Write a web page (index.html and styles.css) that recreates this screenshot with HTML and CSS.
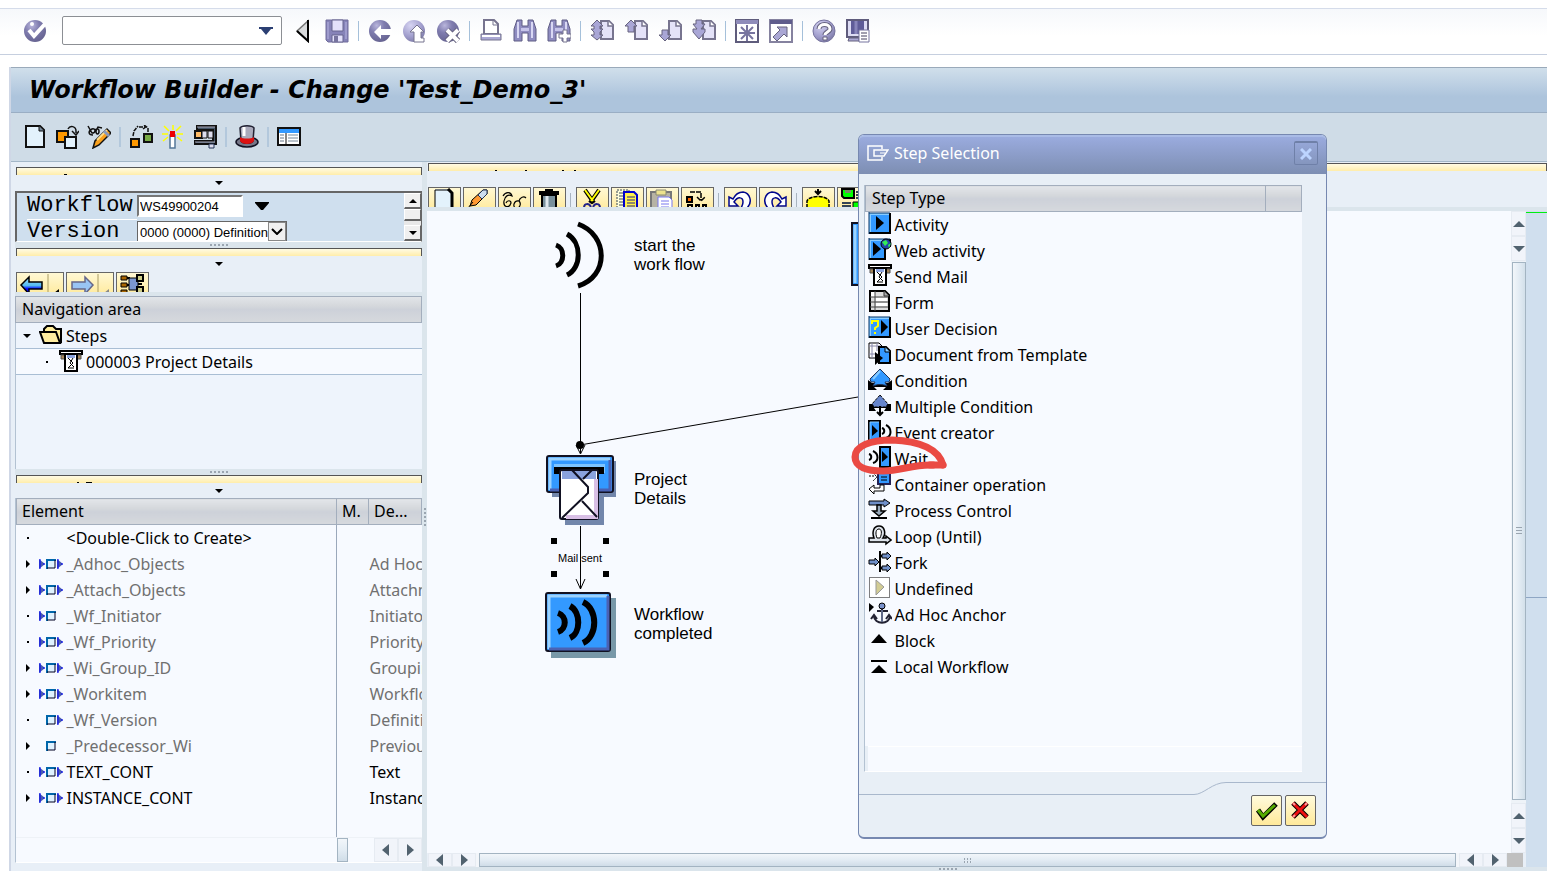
FILE: index.html
```html
<!DOCTYPE html>
<html lang="en">
<head>
    <meta charset="UTF-8">
    <meta name="viewport" content="width=device-width, initial-scale=1.0">
    <title>Workflow Builder - Change 'Test_Demo_3'</title>
    <link rel="stylesheet" href="styles.css">
</head>
<body>
    <!-- Shared icon shapes -->
    <svg class="sprite" aria-hidden="true">
        <defs>
            <radialGradient id="ball" cx="35%" cy="25%" r="85%">
                <stop offset="0" stop-color="#b9b6dc"/><stop offset=".4" stop-color="#807daf"/><stop offset="1" stop-color="#625f8c"/>
            </radialGradient>
            <radialGradient id="ballLight" cx="35%" cy="25%" r="85%">
                <stop offset="0" stop-color="#d6d4f2"/><stop offset=".6" stop-color="#a09dcc"/><stop offset="1" stop-color="#76739f"/>
            </radialGradient>
            <linearGradient id="blueArrow" x1="0" y1="0" x2="0" y2="1">
                <stop offset="0" stop-color="#9df"/><stop offset=".5" stop-color="#5be"/><stop offset=".7" stop-color="#00f"/>
            </linearGradient>
        </defs>
        <symbol id="page-out" viewBox="0 0 24 24"><path d="M11 2h8l4 4v14H11z" fill="#e4e2f8" stroke="#77748f" stroke-width="2"/><path d="M18 2v5h5" fill="#fff" stroke="#77748f" stroke-width="1.5"/></symbol>
        <symbol id="up-arrow" viewBox="0 0 24 24"><path d="M7 1L1 7h3v6h6V7h3z" fill="#a9a6d6" stroke="#66637f"/></symbol>
        <symbol id="down-arrow" viewBox="0 0 24 24"><path d="M7 22l-6-6h3v-5h6v5h3z" fill="#a9a6d6" stroke="#66637f"/></symbol>
        <symbol id="binoculars" viewBox="0 0 24 24"><path d="M4 1h5v6h6V1h5l3 9v12h-8v-8H9v8H1V10z" fill="#8f8cc0" stroke="#5f5c84"/><path d="M5 3v16M19 3v16" stroke="#d9d8f4" stroke-width="2"/><path d="M8 9h8v3H8z" fill="#c6c4ea"/></symbol>
        <symbol id="blue-box" viewBox="0 0 24 24"><path d="M1 1h21v20H1z" fill="#39f"/><path d="M2 21V2h19" fill="none" stroke="#8cf" stroke-width="2"/><path d="M1 21h21V1" fill="none" stroke="#000" stroke-width="2"/><path d="M1 0v22M1 1h21" stroke="#036"/></symbol>
        <symbol id="mail" viewBox="0 0 24 24"><path d="M1 1h22v3H1z" fill="#fff" stroke="#000" stroke-width="2"/><path d="M2 5h20v4H2z" fill="#a68559" stroke="#555"/><path d="M6 4h12v17H6z" fill="#fff" stroke="#000" stroke-width="2"/><path d="M8 5h8v3H8z" fill="#8fa6df"/><path d="M9 8l5 5-5 5h6M14 8l-3 5 4 4" fill="none" stroke="#000"/></symbol>
        <symbol id="in" viewBox="0 0 24 14"><path d="M0 2v10l6-5z" fill="#4a5cae"/><path d="M1 2v10M5 6v2" stroke="#00f"/></symbol>
        <symbol id="var" viewBox="0 0 24 14"><path d="M8 3h8v8H8z" fill="#dff2ff"/><path d="M8 12V3h9" fill="none" stroke="#06a" stroke-width="2"/><path d="M16 3v8H8" fill="none" stroke="#002" stroke-width="1"/></symbol>
        <symbol id="out" viewBox="0 0 24 14"><path d="M18 2v10l6-5z" fill="#4a5cae"/><path d="M19 2v10M23 6v2" stroke="#00f"/></symbol>
    </svg>

    <header class="system-bar">
        <button class="tool" aria-label="Enter"><svg viewBox="0 0 24 24"><circle cx="12" cy="12" r="11" fill="url(#ball)"/><path d="M6 11l5 6L22 5" fill="none" stroke="#fff" stroke-width="4"/><circle cx="9" cy="5" r="2" fill="#fff"/></svg></button>
        <div class="command">
            <input type="text" aria-label="Command">
            <button aria-label="Command history"><svg viewBox="0 0 14 8"><path d="M0 0h14v2H0zM2 2h10L7 8z" fill="#2b3f73"/></svg></button>
        </div>
        <button class="tool" aria-label="Hide command field"><svg viewBox="0 0 24 24"><path d="M17 2v20L6 12z" fill="#d9dbdc" stroke="#777" stroke-width="1.5"/><path d="M6 12l11 10V1" fill="none" stroke="#000" stroke-width="2"/></svg></button>
        <button class="tool" aria-label="Save"><svg viewBox="0 0 24 24"><path d="M1 1h22v22H3l-2-2z" fill="#8683b8" stroke="#706d9c"/><path d="M7 1h11v11H7zM7 16h11v7H7z" fill="#e3e1fb" stroke="#67648f"/><path d="M3 3v17M21 3v17" stroke="#b7b4e2"/><path d="M9 17h4v6H9z" fill="#77749f"/></svg></button>
        <i class="sep"></i>
        <button class="tool" aria-label="Back"><svg viewBox="0 0 24 24"><circle cx="12" cy="12" r="11" fill="url(#ball)"/><path d="M6 13l7-7v4h11v6H13v4z" fill="#fff"/></svg></button>
        <button class="tool" aria-label="Exit"><svg viewBox="0 0 24 24"><circle cx="12" cy="12" r="11" fill="url(#ballLight)"/><path d="M15 6l7 7h-3v6h3v4H12V13H8z" fill="#fff" stroke="#77748f"/></svg></button>
        <button class="tool" aria-label="Cancel"><svg viewBox="0 0 24 24"><circle cx="12" cy="12" r="11" fill="url(#ball)"/><path d="M11 11l11 11M22 11L11 22" stroke="#66637f" stroke-width="6"/><path d="M11 11l11 11M22 11L11 22" stroke="#fff" stroke-width="4"/></svg></button>
        <i class="sep"></i>
        <button class="tool" aria-label="Print"><svg viewBox="0 0 24 24"><path d="M5 15V1h10l4 4v10z" fill="#fff" stroke="#77748f" stroke-width="2"/><path d="M14 1v5h5" fill="none" stroke="#77748f"/><path d="M2 15h20v6H2z" fill="#aaa7d4" stroke="#77748f"/><path d="M3 17h18" stroke="#fff" stroke-width="2"/></svg></button>
        <button class="tool" aria-label="Find"><svg viewBox="0 0 24 24"><use href="#binoculars"/></svg></button>
        <button class="tool" aria-label="Find next"><svg viewBox="0 0 24 24"><use href="#binoculars"/><path d="M16 11h4v4h4v4h-4v4h-4v-4h-4v-4h4z" fill="#fff" stroke="#77748f"/></svg></button>
        <i class="sep"></i>
        <button class="tool" aria-label="First page"><svg viewBox="0 0 24 24"><use href="#page-out"/><path d="M7 1L1 7h3v3H1l3 3v3H1l6 5 6-5h-3v-3l3-3h-3V7h3z" fill="#a9a6d6" stroke="#66637f"/></svg></button>
        <button class="tool" aria-label="Previous page"><svg viewBox="0 0 24 24"><use href="#page-out"/><use href="#up-arrow"/></svg></button>
        <button class="tool" aria-label="Next page"><svg viewBox="0 0 24 24"><use href="#page-out"/><use href="#down-arrow"/></svg></button>
        <button class="tool" aria-label="Last page"><svg viewBox="0 0 24 24"><use href="#page-out"/><path d="M4 1h6v4h3l-4 5h4v3l-6 7-6-7v-3h4L1 5h3z" fill="#a9a6d6" stroke="#66637f"/></svg></button>
        <i class="sep"></i>
        <button class="tool" aria-label="New session"><svg viewBox="0 0 24 24"><path d="M1 1h22v22H1z" fill="#fff" stroke="#5f5c7c" stroke-width="2"/><path d="M1 1h22v4H1z" fill="#8f8cba"/><path d="M12 6v16M4 14h16M6 8l12 12M18 8L6 20" stroke="#77749f" stroke-width="2"/></svg></button>
        <button class="tool" aria-label="Create shortcut"><svg viewBox="0 0 24 24"><path d="M1 1h22v22H1z" fill="#fff" stroke="#85829f" stroke-width="2"/><path d="M1 1h22v4H1z" fill="#5f5c8c"/><path d="M8 8h10v10l-3-3-7 7-4-4 7-7z" fill="#aaa7d4" stroke="#66637f"/></svg></button>
        <i class="sep"></i>
        <button class="tool" aria-label="Help"><svg viewBox="0 0 24 24"><circle cx="12" cy="12" r="11" fill="url(#ballLight)" stroke="#77749f"/><path d="M7 10c0-6 11-6 11 0 0 3-5 3-5 6" fill="none" stroke="#66637f" stroke-width="5"/><path d="M7 10c0-6 11-6 11 0 0 3-5 3-5 6" fill="none" stroke="#fff" stroke-width="3"/><path d="M11 18h4v3h-4z" fill="#fff" stroke="#66637f"/></svg></button>
        <button class="tool" aria-label="Customize layout"><svg viewBox="0 0 24 24"><path d="M1 1h21v17H1z" fill="#dddcf4" stroke="#5f5c7c" stroke-width="2"/><path d="M5 2h13v13H5z" fill="#5f5c98"/><path d="M10 2v13" stroke="#8885ba" stroke-width="3"/><path d="M3 19h10v3H2z" fill="#aaa7d4" stroke="#66637f"/><path d="M13 11h10v12H13z" fill="#fff" stroke="#77749f"/><path d="M15 14h6M15 17h6M15 20h6" stroke="#44415f"/></svg></button>
    </header>

    <div class="window">
        <h1 class="title">Workflow Builder - Change 'Test_Demo_3'</h1>

        <div class="app-bar">
            <button class="tool" aria-label="New"><svg viewBox="0 0 24 24"><path d="M3 1h14l4 4v17H3z" fill="#e3f2fc" stroke="#111" stroke-width="2"/><path d="M16 1v5h5" fill="#789" stroke="#111"/></svg></button>
            <button class="tool" aria-label="Other workflow"><svg viewBox="0 0 24 24"><path d="M2 6h11v11H2z" fill="#f90" stroke="#111" stroke-width="2"/><path d="M10 12h11v11H10z" fill="#e3f2fc" stroke="#111" stroke-width="2"/><path d="M13 4c2-4 8-3 8 2v2M17 6l4 4 3-4" fill="none" stroke="#111" stroke-width="1.5"/></svg></button>
            <button class="tool" aria-label="Display or change"><svg viewBox="0 0 24 24"><path d="M1 1l4 7c4 0 4-5 0-4-4 2-4 6 1 6M8 7c0-4 4-4 4-1 0 4-3 4-3 0l2-4 4 1" fill="none" stroke="#111" stroke-width="1.5"/><path d="M6 23l2-7L20 4l4 4-12 12z" fill="#f9a01b" stroke="#111" stroke-width="1.5"/><path d="M10 15L20 5" stroke="#fd8" stroke-width="2"/><path d="M17 6l5 5" stroke="#89b" stroke-width="3"/></svg></button>
            <i class="sep"></i>
            <button class="tool" aria-label="Test"><svg viewBox="0 0 24 24"><path d="M2 14h8v8H2z" fill="#f90" stroke="#111" stroke-width="2"/><path d="M15 9h8v8h-8z" fill="#7a4" stroke="#111" stroke-width="2"/><path d="M4 11L5 6l4-5M10 2h7M15 0l4 3v4M14 4l4-3" fill="none" stroke="#111" stroke-width="1.5" stroke-dasharray="4 1"/></svg></button>
            <button class="tool" aria-label="Activate"><svg viewBox="0 0 24 24"><path d="M9 10h5v13H9z" fill="#fff" stroke="#579" stroke-width="1.5"/><path d="M9 6h5v6H9z" fill="#e00"/><path d="M12 0v5M3 1l5 5M20 1l-5 5M1 9h6M16 9h6M7 12l-5 4M16 12l5 4" stroke="#ff0" stroke-width="1.5"/></svg></button>
            <button class="tool" aria-label="Where used"><svg viewBox="0 0 24 24"><path d="M4 1h19v18H2v-3h18V5H4z" fill="#456" stroke="#111" stroke-width="2"/><path d="M4 2h18M2 17h20" stroke="#aab"/><path d="M2 6h7v7H2z" fill="#fb6" stroke="#111" stroke-width="2"/><path d="M9 6h5v7H9zM15 6h5v7h-5z" fill="#dde" stroke="#111"/><path d="M16 19h5v4h-5z" fill="#dde" stroke="#235"/></svg></button>
            <i class="sep"></i>
            <button class="tool" aria-label="Services"><svg viewBox="0 0 24 24"><ellipse cx="12" cy="17" rx="11" ry="5" fill="#778" stroke="#112" stroke-width="1.5"/><path d="M5 3c2-3 12-3 14 0l-1 13c-2 3-10 3-12 0z" fill="#aab" stroke="#223" stroke-width="1.5"/><path d="M9 2v9" stroke="#fff" stroke-width="3"/><path d="M5 12c3 2 11 2 14 0v4c-2 4-12 4-14 0z" fill="#d11"/></svg></button>
            <i class="sep"></i>
            <button class="tool" aria-label="Documentation"><svg viewBox="0 0 24 24"><path d="M1 3h22v17H1z" fill="#fff" stroke="#111" stroke-width="2"/><path d="M2 4h20v4H2z" fill="#39f"/><path d="M9 8v11" stroke="#111"/><path d="M3 10h4M3 13h4M3 16h4" stroke="#678"/><path d="M11 10h10M11 13h10M11 16h10" stroke="#789"/></svg></button>
        </div>

        <main class="work">
            <aside class="side">
                <section class="info">
                    <div class="strip"><svg viewBox="0 0 100 1" class="hint"><path d="M47 0h3v1h-3z"/></svg></div>
                    <button class="collapse" aria-label="More functions"><svg viewBox="0 0 8 4"><path d="M0 0h8L4 4z"/></svg></button>
                    <div class="version-box">
                        <div class="fields">
                            <label for="wf">Workflow</label>
                            <div class="wf-field">
                                <input type="text" id="wf" value="WS49900204">
                                <button aria-label="Choose workflow"><svg viewBox="0 0 14 8"><path d="M0 0h14v1L8 8H6L0 1z"/></svg></button>
                            </div>
                            <label for="ver">Version</label>
                            <div class="select">
                                <select id="ver"><option>0000 (0000) Definition</option></select>
                                <span class="select-arrow"><svg viewBox="0 0 12 7"><path d="M1 1l5 5 5-5" fill="none" stroke="#000" stroke-width="2"/></svg></span>
                            </div>
                        </div>
                        <div class="mini-scroll">
                            <button aria-label="Scroll up"><svg viewBox="0 0 8 4"><path d="M4 0l4 4H0z"/></svg></button>
                            <span class="mini-thumb"></span>
                            <button aria-label="Scroll down"><svg viewBox="0 0 8 4"><path d="M0 0h8L4 4z"/></svg></button>
                        </div>
                    </div>
                </section>
                <div class="splitter"><i class="dots"></i></div>

                <section class="navigation">
                    <div class="strip"></div>
                    <button class="collapse" aria-label="More functions"><svg viewBox="0 0 8 4"><path d="M0 0h8L4 4z"/></svg></button>
                    <div class="key-row nav-keys">
                        <button class="key wide" aria-label="Back"><svg viewBox="0 0 46 20"><path d="M4 12l8-8v5h13v7H12v5z" fill="url(#blueArrow)" stroke="#000" stroke-width="1.5"/><path d="M31 1v19" stroke="#a99c66"/><path d="M42 16v4h-5z"/></svg></button>
                        <button class="key wide" aria-label="Forward"><svg viewBox="0 0 46 20"><path d="M26 12l-8-8v5H5v7h13v5z" fill="#99c4f4" stroke="#668" stroke-width="1.5"/><path d="M31 1v19" stroke="#a99c66"/><path d="M42 16v4h-5z" fill="#888"/></svg></button>
                        <button class="key" aria-label="Overview"><svg viewBox="0 0 31 20"><path d="M4 3h6v4H4zM4 10h6v4H4zM4 17h6v3H4z" fill="#a60" stroke="#000"/><path d="M10 5h3M10 12h3M20 11h5M20 17h3" stroke="#000" stroke-width="2"/><path d="M12 5h9v12h-9z" fill="#7b96cf" stroke="#000"/><path d="M20 2h6v6h-6zM20 14h6v6h-6z" fill="#cc8" stroke="#000" stroke-width="2"/></svg></button>
                    </div>
                    <div class="splitter thin"></div>
                    <h2 class="head">Navigation area</h2>
                    <ul class="tree">
                        <li><svg class="twig" viewBox="0 0 8 8"><path d="M0 2h8L4 6z"/></svg><svg class="icon" viewBox="0 0 24 24"><path d="M5 18V5l3-3h6l3 3h5v13z" fill="#ffee9c" stroke="#000" stroke-width="2"/><path d="M1 8h16l4 11H5z" fill="#ffeda0" stroke="#000" stroke-width="2"/></svg>Steps</li>
                        <li class="child"><svg class="twig" viewBox="0 0 8 8"><path d="M3 3h2v2H3z"/></svg><svg class="icon"><use href="#mail"/></svg>000003 Project Details</li>
                    </ul>
                </section>
                <div class="splitter"><i class="dots"></i></div>

                <section class="elements">
                    <div class="strip"><svg viewBox="0 0 100 1" class="hint"><path d="M60 0h2v1h-2zM69 0h6v1h-6z"/></svg></div>
                    <button class="collapse" aria-label="More functions"><svg viewBox="0 0 8 4"><path d="M0 0h8L4 4z"/></svg></button>
                    <div class="grid-box">
                        <table class="element-table">
                            <thead><tr><th class="c-name">Element</th><th class="c-m">M.</th><th class="c-d">De...</th></tr></thead>
                            <tbody>
                                <tr class="own"><td><svg class="twig" viewBox="0 0 8 8"><path d="M3 3h2v2H3z"/></svg><svg class="flow"></svg>&lt;Double-Click to Create&gt;</td><td></td><td></td></tr>
                                <tr><td><svg class="twig" viewBox="0 0 8 8"><path d="M2 0v8l4-4z"/></svg><svg class="flow"><use href="#in"/><use href="#var"/><use href="#out"/></svg>_Adhoc_Objects</td><td></td><td>Ad Hoc</td></tr>
                                <tr><td><svg class="twig" viewBox="0 0 8 8"><path d="M2 0v8l4-4z"/></svg><svg class="flow"><use href="#in"/><use href="#var"/><use href="#out"/></svg>_Attach_Objects</td><td></td><td>Attachm</td></tr>
                                <tr><td><svg class="twig" viewBox="0 0 8 8"><path d="M3 3h2v2H3z"/></svg><svg class="flow"><use href="#in"/><use href="#var"/></svg>_Wf_Initiator</td><td></td><td>Initiator</td></tr>
                                <tr><td><svg class="twig" viewBox="0 0 8 8"><path d="M3 3h2v2H3z"/></svg><svg class="flow"><use href="#in"/><use href="#var"/><use href="#out"/></svg>_Wf_Priority</td><td></td><td>Priority</td></tr>
                                <tr><td><svg class="twig" viewBox="0 0 8 8"><path d="M2 0v8l4-4z"/></svg><svg class="flow"><use href="#in"/><use href="#var"/><use href="#out"/></svg>_Wi_Group_ID</td><td></td><td>Grouping</td></tr>
                                <tr><td><svg class="twig" viewBox="0 0 8 8"><path d="M2 0v8l4-4z"/></svg><svg class="flow"><use href="#in"/><use href="#var"/><use href="#out"/></svg>_Workitem</td><td></td><td>Workflow</td></tr>
                                <tr><td><svg class="twig" viewBox="0 0 8 8"><path d="M3 3h2v2H3z"/></svg><svg class="flow"><use href="#var"/><use href="#out"/></svg>_Wf_Version</td><td></td><td>Definiti</td></tr>
                                <tr><td><svg class="twig" viewBox="0 0 8 8"><path d="M2 0v8l4-4z"/></svg><svg class="flow"><use href="#var"/></svg>_Predecessor_Wi</td><td></td><td>Previou</td></tr>
                                <tr class="own"><td><svg class="twig" viewBox="0 0 8 8"><path d="M3 3h2v2H3z"/></svg><svg class="flow"><use href="#in"/><use href="#var"/><use href="#out"/></svg>TEXT_CONT</td><td></td><td>Text</td></tr>
                                <tr class="own"><td><svg class="twig" viewBox="0 0 8 8"><path d="M2 0v8l4-4z"/></svg><svg class="flow"><use href="#in"/><use href="#var"/><use href="#out"/></svg>INSTANCE_CONT</td><td></td><td>Instanc</td></tr>
                            </tbody>
                        </table>
                        <div class="grid-rest"></div>
                        <div class="grid-foot">
                            <span class="thumb-h small"></span>
                            <button class="arrow" aria-label="Scroll left"><svg viewBox="0 0 12 12"><path d="M9 0v12L2 6z"/></svg></button>
                            <button class="arrow" aria-label="Scroll right"><svg viewBox="0 0 12 12"><path d="M3 0v12l7-6z"/></svg></button>
                        </div>
                    </div>
                </section>
            </aside>

            <div class="v-splitter"><i class="v-dots"></i></div>

            <section class="editor">
                <div class="strip"><svg viewBox="0 0 200 1" class="hint wide-hint"><path d="M66 0h2v1h-2zM96 0h2v1h-2zM133 0h2v1h-2zM145 0h2v1h-2z"/></svg></div>
                <div class="key-row editor-keys">
                    <button class="key" aria-label="Create"><svg viewBox="0 0 31 20"><path d="M6 1h14l3 4v16H6z" fill="#e3f2fc"/><path d="M6 20V2h13" fill="none" stroke="#000"/><path d="M19 1l4 4v15" fill="none" stroke="#000" stroke-width="3"/></svg></button>
                    <button class="key" aria-label="Change"><svg viewBox="0 0 31 20"><path d="M6 18l2-6L19 2h4v4L12 17z" fill="#f93" stroke="#000"/><path d="M14 7l5-5h4v4l-5 5z" fill="#cde" stroke="#235"/><path d="M4 20l5-6" stroke="#000"/></svg></button>
                    <button class="key" aria-label="Display"><svg viewBox="0 0 31 20"><path d="M4 8c3-5 8-4 9 0-4-2-7 0-8 5-1 6 5 8 7 2 0-3-4-3-5 0M20 13c-5-1-7 6-3 7 3 1 6-4 3-7zm0 0c1-4 5-5 7-3" fill="none" stroke="#000" stroke-width="1.2"/></svg></button>
                    <button class="key" aria-label="Delete"><svg viewBox="0 0 31 20"><path d="M6 4h18v2H6zM12 4V2h6v2" fill="#dde" stroke="#000" stroke-width="2"/><path d="M8 7h14v14H8z" fill="#78909c" stroke="#000" stroke-width="2"/><path d="M13 8v12" stroke="#dfe8ee" stroke-width="3"/></svg></button>
                    <i class="key-sep"></i>
                    <button class="key" aria-label="Cut"><svg viewBox="0 0 31 20"><path d="M8 2l9 13M22 2l-9 13" stroke="#000" stroke-width="4"/><path d="M8 2l8 11M22 2l-8 11" stroke="#ff0" stroke-width="2"/><path d="M7 20c0-5 5-5 7-1M23 20c0-5-5-5-7-1" fill="none" stroke="#228" stroke-width="2"/></svg></button>
                    <button class="key" aria-label="Copy"><svg viewBox="0 0 31 20"><path d="M5 2h12v18H5z" fill="#ffd" stroke="#345" stroke-dasharray="2 1"/><path d="M7 5h5M7 8h5M7 11h5M7 14h5M7 17h5" stroke="#345"/><path d="M12 4h10l3 3v14H12z" fill="#fff04d" stroke="#00c" stroke-width="2"/><path d="M15 9h8M15 12h8M15 15h8M15 18h8" stroke="#228"/></svg></button>
                    <button class="key" aria-label="Paste"><svg viewBox="0 0 31 20"><path d="M4 4h20v17H4z" fill="#b7b3a4" stroke="#777" stroke-width="2"/><path d="M9 2h10v5H9z" fill="#ece28e" stroke="#887"/><path d="M11 9h11l3 3v9H11z" fill="#fff" stroke="#77e"/><path d="M14 13h8M14 16h8M14 19h8" stroke="#77e"/></svg></button>
                    <button class="key" aria-label="Move"><svg viewBox="0 0 31 20"><path d="M5 9h5v5H5z" fill="#f60" stroke="#000" stroke-width="2"/><path d="M8 4h11v8M15 9l4 4 4-4" fill="none" stroke="#000" stroke-width="1.5" stroke-dasharray="5 1"/><path d="M6 20v-3h4v3M14 20v-3h3v3M21 20v-3h3v3" fill="none" stroke="#000" stroke-width="2"/></svg></button>
                    <i class="key-sep"></i>
                    <button class="key" aria-label="Undo"><svg viewBox="0 0 31 20"><path d="M4 9v9h9l-4-4c4-6 9-5 9 0 0 3-1 4-2 6h6c6-6 3-15-4-16-5 0-8 3-10 7z" fill="#fff" stroke="#00068c" stroke-width="1.5"/></svg></button>
                    <button class="key" aria-label="Redo"><svg viewBox="0 0 31 20"><path d="M26 9v9h-9l4-4c-4-6-9-5-9 0 0 3 1 4 2 6H8C2 14 5 5 12 4c5 0 8 3 10 7z" fill="#fff" stroke="#00068c" stroke-width="1.5"/></svg></button>
                    <i class="key-sep"></i>
                    <button class="key" aria-label="Generate"><svg viewBox="0 0 31 20"><path d="M4 20v-7c2-6 20-6 22 0v7" fill="#ff0" stroke="#000" stroke-width="1.5" stroke-dasharray="4 1"/><path d="M15 1v5M12 3l3 3 3-3" fill="none" stroke="#000" stroke-width="2"/></svg></button>
                    <button class="key" aria-label="Save as"><svg viewBox="0 0 31 20"><path d="M4 1h12v9H6l-2-2z" fill="#0f0" stroke="#000" stroke-width="2"/><path d="M7 2h6v3H7z" fill="#786"/><path d="M18 4h5M18 7h5M18 10h5M4 15h9M4 18h9" stroke="#345" stroke-width="2"/><path d="M15 14h8v7h-8z" fill="#0f0" stroke="#000"/></svg></button>
                </div>
                <div class="splitter thin"></div>

                <div class="canvas-area">
                    <div class="canvas">
                        <svg class="edges" viewBox="0 0 480 420">
                            <path d="M153.500 82v160M149 234l4.500 9 4.500-9M153 234l278-48M153.500 315v63M149 368l4.500 10 4.500-10" fill="none" stroke="#000"/>
                            <circle cx="153" cy="234" r="4"/>
                            <path d="M124 327h6v6h-6zM176 327h6v6h-6zM124 360h6v6h-6zM176 360h6v6h-6z"/>
                        </svg>
                        <svg class="node start" viewBox="0 0 54 68"><path d="M3 24c9 3 9 18 0 21M14 13c15 8 15 34 0 41M25 3c31 11 31 53 0 62" fill="none" stroke="#000" stroke-width="5"/></svg>
                        <svg class="node mail-node" viewBox="0 0 72 72">
                            <path d="M6 6h64v36H58v28H19V42H6z" fill="#7286ab"/>
                            <rect x="1" y="1" width="66" height="36" rx="2" fill="#39f" stroke="#112" stroke-width="2"/>
                            <path d="M4 35V4h60" fill="none" stroke="#9cd3ff" stroke-width="3"/><path d="M4 35h60V5" fill="none" stroke="#4a62b4" stroke-width="3"/>
                            <path d="M8 9h51v9H8z" fill="#7dc4ff"/><path d="M8 12h50v7H8z"/>
                            <rect x="14" y="15" width="38" height="49" rx="2" fill="#fff" stroke="#112" stroke-width="2"/><path d="M16 16h34v8H16z" fill="#8aa2dd"/><path d="M50 24v38H20" fill="none" stroke="#d8bfe5" stroke-width="4"/>
                            <path d="M26 15l16 17v6L16 63M46 15l-9 9M36 46l15 16" fill="none" stroke="#112" stroke-width="2"/>
                        </svg>
                        <svg class="node done" viewBox="0 0 72 66">
                            <path d="M6 6h65v60H6z" fill="#7898a8"/>
                            <rect x="1" y="1" width="64" height="58" rx="2" fill="#39f" stroke="#112" stroke-width="2"/>
                            <path d="M4 57V4h58" fill="none" stroke="#9cd3ff" stroke-width="3"/><path d="M4 57h59V4" fill="none" stroke="#4a62b4" stroke-width="3"/>
                            <path d="M13 21c9 3 9 16 0 19M25 14c11 6 11 27 0 32M38 10c15 7 15 34 0 41" fill="none" stroke="#000" stroke-width="6"/>
                        </svg>
                        <svg class="node hidden-node" viewBox="0 0 20 66"><path d="M1 1h30v62H1z" fill="#39f" stroke="#112" stroke-width="2"/><path d="M4 3v58" stroke="#9cd3ff" stroke-width="3"/></svg>
                        <p class="label l-start">start the<br>work flow</p>
                        <p class="label l-mail">Project<br>Details</p>
                        <p class="label l-sent">Mail sent</p>
                        <p class="label l-done">Workflow<br>completed</p>
                    </div>
                    <div class="scroll-v">
                        <button class="arrow" aria-label="Page up"><svg viewBox="0 0 12 12"><path d="M0 9h12L6 3z"/></svg></button>
                        <button class="arrow" aria-label="Scroll down"><svg viewBox="0 0 12 12"><path d="M0 3h12L6 9z"/></svg></button>
                        <span class="thumb-v"><i class="v-dots"></i></span>
                        <button class="arrow" aria-label="Scroll up"><svg viewBox="0 0 12 12"><path d="M0 9h12L6 3z"/></svg></button>
                        <button class="arrow" aria-label="Page down"><svg viewBox="0 0 12 12"><path d="M0 3h12L6 9z"/></svg></button>
                    </div>
                    <div class="overview"><div class="overview-top"></div></div>
                </div>
                <div class="scroll-h">
                    <button class="arrow" aria-label="Page left"><svg viewBox="0 0 12 12"><path d="M9 0v12L2 6z"/></svg></button>
                    <button class="arrow" aria-label="Scroll right"><svg viewBox="0 0 12 12"><path d="M3 0v12l7-6z"/></svg></button>
                    <span class="thumb-h"><i class="grip"></i></span>
                    <button class="arrow" aria-label="Scroll left"><svg viewBox="0 0 12 12"><path d="M9 0v12L2 6z"/></svg></button>
                    <button class="arrow" aria-label="Page right"><svg viewBox="0 0 12 12"><path d="M3 0v12l7-6z"/></svg></button>
                    <span class="corner"></span>
                </div>
                <div class="splitter thin last"><i class="dots"></i></div>
            </section>
        </main>
    </div>

    <!-- Step Selection window -->
    <div class="dialog" role="dialog" aria-labelledby="dialogTitle">
        <div class="dialog-head">
            <svg class="dialog-icon" viewBox="0 0 22 16"><path d="M15 4V1H1v14h14v-3M7 5h14l-4 6H7z" fill="none" stroke="#fff" stroke-width="1.5"/><path d="M13 8h5" stroke="#fff"/></svg>
            <h2 id="dialogTitle">Step Selection</h2>
            <button class="close" aria-label="Close"><svg viewBox="0 0 12 12"><path d="M1 1l10 10M11 1L1 11" stroke="#bcd4ff" stroke-width="3"/></svg></button>
        </div>
        <div class="dialog-body">
            <div class="step-box">
                <table class="step-table">
                    <thead><tr><th>Step Type</th><th class="c-end"></th></tr></thead>
                    <tbody>
                        <tr><td colspan="2"><svg class="icon" viewBox="0 0 24 24"><use href="#blue-box"/><path d="M8 4v14l8-7z"/></svg>Activity</td></tr>
                        <tr><td colspan="2"><svg class="icon" viewBox="0 0 24 24"><use href="#blue-box"/><path d="M18 9h6v15h-6z" fill="#f7faff"/><path d="M17 8v13H1" fill="none" stroke="#000" stroke-width="2"/><path d="M5 4v14l8-7z"/><circle cx="18" cy="6" r="5" fill="#24a" stroke="#000"/><path d="M14 4l4-2 2 3-3 3zM20 7l3-2-2 5z" fill="#3e5"/></svg>Web activity</td></tr>
                        <tr><td colspan="2"><svg class="icon"><use href="#mail"/></svg>Send Mail</td></tr>
                        <tr><td colspan="2"><svg class="icon" viewBox="0 0 24 24"><path d="M2 1h15l4 4v16H2z" fill="#ddd" stroke="#000" stroke-width="2"/><path d="M3 2h4v5H3zM8 8h11v3H8zM8 13h11v3H8z" fill="#fff"/><path d="M7 1v20M2 7h18M2 12h18M2 17h18" stroke="#444"/><path d="M16 1v5h5" fill="#aaa" stroke="#333"/></svg>Form</td></tr>
                        <tr><td colspan="2"><svg class="icon" viewBox="0 0 24 24"><use href="#blue-box"/><path d="M4 8V5h6v5l-3 2v2M7 16v2" fill="none" stroke="#ff0" stroke-width="2"/><path d="M13 4v14l7-7z"/></svg>User Decision</td></tr>
                        <tr><td colspan="2"><svg class="icon" viewBox="0 0 24 24"><path d="M1 1h10l3 3v12H1z" fill="#fff" stroke="#000"/><path d="M4 1v15M9 1v8M1 4h12M1 12h6" stroke="#88a"/><path d="M11 5h7l4 4v12H11z" fill="#39f" stroke="#000" stroke-width="2"/><path d="M17 5v5h5" fill="#8cf" stroke="#000"/><path d="M7 10v13l8-7z"/></svg>Document from Template</td></tr>
                        <tr><td colspan="2"><svg class="icon" viewBox="0 0 24 24"><path d="M0 12v10h9l-3-3h12l-3 3h9V12l-4 3H4z"/><path d="M12 1l10 10-1 3h-4l2 4c-4-2-10-2-14 0l2-4H3l-1-3z" fill="#39f" stroke="#235"/><path d="M12 3l-7 8" stroke="#8cf" stroke-width="2"/></svg>Condition</td></tr>
                        <tr><td colspan="2"><svg class="icon" viewBox="0 0 24 24"><path d="M1 10v7h7l-2-3h12l-2 3h7v-7z"/><path d="M12 1l8 9-2 3H6l-2-3z" fill="#6685cc" stroke="#000" stroke-dasharray="3 1"/><path d="M12 12v9M9 18l3 3 3-3" fill="none" stroke="#000" stroke-width="2"/></svg>Multiple Condition</td></tr>
                        <tr><td colspan="2"><svg class="icon" viewBox="0 0 24 24"><path d="M1 1h11v20H1z" fill="#39f" stroke="#000" stroke-width="2"/><path d="M2 20V2h9" fill="none" stroke="#8cf"/><path d="M4 5v11l6-5z"/><path d="M14 8c3 1 3 5 0 6M18 5c6 3 6 11 0 13" fill="none" stroke="#000" stroke-width="2"/></svg>Event creator</td></tr>
                        <tr><td colspan="2"><svg class="icon" viewBox="0 0 24 24"><path d="M12 1h10v20H12z" fill="#39f" stroke="#000" stroke-width="2"/><path d="M14 5v11l6-5z"/><path d="M1 8c3 1 3 5 0 6M5 5c6 3 6 10 0 12" fill="none" stroke="#000" stroke-width="2"/></svg>Wait</td></tr>
                        <tr><td colspan="2"><svg class="icon" viewBox="0 0 24 24"><path d="M10 1h12v11H10z" fill="#39f" stroke="#225" stroke-width="2"/><path d="M13 5h6M13 8h6" stroke="#000"/><path d="M1 4h6M5 1l4 4-4 4" fill="none" stroke="#000" stroke-dasharray="2 1"/><path d="M12 13v3H6v-3l-5 4 5 5v-3h10v-6z" fill="#fff" stroke="#000"/></svg>Container operation</td></tr>
                        <tr><td colspan="2"><svg class="icon" viewBox="0 0 24 24"><path d="M1 3h15V1l6 4-6 4V7H1z" fill="#6f8fc8" stroke="#000"/><path d="M9 7h4v6h4l-6 5-6-5h4z" fill="#9ab"  stroke="#000" stroke-width="1.5"/><path d="M3 20h16" stroke="#000" stroke-width="2"/></svg>Process Control</td></tr>
                        <tr><td colspan="2"><svg class="icon" viewBox="0 0 24 24"><path d="M1 14h5c-2-5-1-12 5-12s7 8 4 12h3v-2l5 4-5 4v-2H1z" fill="#dde3ea" stroke="#000" stroke-width="1.5"/><path d="M9 14c-2-5-1-9 2-9s3 5 1 9z" fill="#fff" stroke="#000"/></svg>Loop (Until)</td></tr>
                        <tr><td colspan="2"><svg class="icon" viewBox="0 0 24 24"><path d="M12 1v21M12 6h5M12 18h5" stroke="#000" stroke-width="2"/><path d="M1 10h6V8l4 4-4 4v-2H1zM14 4h5V2l4 4-4 4V8h-5zM14 16h5v-2l4 4-4 4v-2h-5z" fill="#6f8fc8" stroke="#000"/></svg>Fork</td></tr>
                        <tr><td colspan="2"><svg class="icon" viewBox="0 0 24 24"><path d="M1.500 1.500h20v20h-20z" fill="#fff" stroke="#000" stroke-dasharray="1 1"/><path d="M8 4v15l8-8z" fill="#d2cc94" stroke="#999"/></svg>Undefined</td></tr>
                        <tr><td colspan="2"><svg class="icon" viewBox="0 0 24 24"><path d="M1 1v9l5-5z"/><circle cx="14" cy="4" r="3" fill="#7b93cc" stroke="#000"/><path d="M14 6v14M9 9h11M6 14c0 9 16 9 16 0M3 17l3-4 3 4M18 17l3-4 3 4" fill="none" stroke="#223" stroke-width="2"/><path d="M14 8v12" stroke="#9db1df"/></svg>Ad Hoc Anchor</td></tr>
                        <tr><td colspan="2"><svg class="icon" viewBox="0 0 24 24"><path d="M3 15h16l-8-9z"/></svg>Block</td></tr>
                        <tr><td colspan="2"><svg class="icon" viewBox="0 0 24 24"><path d="M3 6h16v2H3zM3 19h16l-8-8z"/></svg>Local Workflow</td></tr>
                    </tbody>
                </table>
            </div>
            <div class="step-foot"></div>
        </div>
        <div class="dialog-foot">
            <span class="foot-line"></span>
            <svg class="foot-curve" viewBox="0 0 32 14"><path d="M0 12.500c10 0 18-12 32-12" fill="none" stroke="#a9b8cc"/></svg>
            <div class="foot-keys">
                <button class="ok-key" aria-label="Continue"><svg viewBox="0 0 24 24"><path d="M3 11l5 7L21 5" fill="none" stroke="#000" stroke-width="5"/><path d="M3 11l5 6L20 6" fill="none" stroke="#5a0" stroke-width="3"/></svg></button>
                <button class="ok-key" aria-label="Cancel"><svg viewBox="0 0 24 24"><path d="M4 4l14 14M18 4L4 18" stroke="#000" stroke-width="5"/><path d="M4 4l14 14M18 4L4 18" stroke="#e11" stroke-width="3"/><path d="M4 4l2 2M18 4l-2 2M4 18l2-2" stroke="#f99" stroke-width="2"/></svg></button>
            </div>
        </div>
        <svg class="marker" viewBox="0 0 98 42"><path d="M93 30C88 12 66 6 42 5 20 5 5 11 5 22c0 10 12 14 28 14 18 0 30-7 50-6" fill="none" stroke="#ea4a43" stroke-width="7" stroke-linecap="round" stroke-linejoin="round"/><path d="M80 30h13" stroke="#ea4a43" stroke-width="7" stroke-linecap="round"/></svg>
    </div>
</body>
</html>
```

FILE: styles.css
```css
* {
    box-sizing: border-box;
}
body {
    margin: 0;
    min-height: 100vh;
    display: flex;
    flex-direction: column;
    position: relative;
    background-color: #fff;
    font-family: "Noto Sans", Tahoma, sans-serif;
    font-size: 16px;
    line-height: 26px;
    color: #000;
}
button {
    padding: 0;
    border: none;
    background: none;
    display: flex;
    align-items: center;
    justify-content: center;
    flex: none;
    cursor: pointer;
}
h1, h2, p, ul {
    margin: 0;
    padding: 0;
}
svg {
    display: block;
    flex: none;
}
.sprite {
    position: absolute;
    width: 0;
    height: 0;
}

/* System toolbar */
.system-bar {
    display: flex;
    align-items: center;
    gap: 8px;
    margin-top: 8px;
    height: 47px;
    padding: 0 22px 2px;
    border-top: 1px solid #d5dcea;
    border-bottom: 1px solid #c6cfdf;
    background: linear-gradient(#f6f8fb, #fff 60%);
}
.tool {
    width: 26px;
    height: 26px;
}
.tool svg {
    width: 24px;
    height: 24px;
}
.sep {
    width: 1px;
    height: 20px;
    background-color: #a5c0da;
    flex: none;
}
.command {
    display: flex;
    width: 220px;
    height: 29px;
    margin: 0 0 0 6px;
    border: 1px solid #8c8f94;
    border-radius: 2px;
    background-color: #fff;
}
.command input {
    flex: 1;
    min-width: 0;
    border: none;
    background: none;
    font-size: 16px;
}
.command button {
    width: 30px;
}
.command svg {
    width: 14px;
    height: 8px;
}

/* Main window */
.window {
    flex: 1;
    display: flex;
    flex-direction: column;
    margin: 12px 0 0 9px;
    border-left: 2px solid #cfd7e6;
    min-height: 0;
}
.title {
    height: 46px;
    padding-left: 18px;
    border-top: 1px solid #9aaaba;
    border-bottom: 1px solid #9aaec4;
    background: linear-gradient(#d0dfeb, #adc4dc 65%, #adc4dc);
    font-family: "DejaVu Sans", Verdana, sans-serif;
    font-size: 24px;
    font-style: italic;
    font-weight: bold;
    line-height: 44px;
}
.app-bar {
    display: flex;
    align-items: center;
    gap: 8px;
    height: 49px;
    padding-left: 12px;
    border-bottom: 1px solid #a3b7c8;
    background-color: #cfdce7;
}
.app-bar .tool {
    width: 24px;
}
.app-bar .sep {
    width: 2px;
    background-color: #b3c8dc;
}
.work {
    flex: 1;
    display: flex;
    background-color: #e8eff7;
}
.side {
    width: 411px;
    flex: none;
    display: flex;
    flex-direction: column;
    padding: 0 0 8px 4px;
}
.strip {
    height: 8px;
    margin-left: 1px;
    border: 1px solid #555;
    border-bottom: none;
    background: linear-gradient(#fffbe4, #ffedaa);
    display: flex;
    align-items: flex-end;
}
.hint {
    width: 100px;
    height: 1px;
}
.wide-hint {
    width: 200px;
}
.collapse {
    width: 100%;
    height: 16px;
}
.collapse svg {
    width: 8px;
    height: 4px;
}
.splitter {
    height: 6px;
    background-color: #dbe5ec;
    display: flex;
    align-items: center;
    justify-content: center;
    flex: none;
}
.splitter.thin {
    height: 4px;
}
.splitter.last {
    padding-right: 78px;
}
.dots {
    width: 18px;
    height: 2px;
    background: repeating-linear-gradient(90deg, #9aa5b0 0 2px, transparent 2px 4px);
}
.v-splitter {
    width: 5px;
    background-color: #dbe5ec;
    display: flex;
    flex-direction: column;
    flex: none;
    align-items: center;
    justify-content: center;
}
.v-dots {
    width: 2px;
    height: 18px;
    background: repeating-linear-gradient(#9aa5b0 0 2px, transparent 2px 4px);
}

/* Workflow and version */
.info {
    padding-top: 5px;
}
.version-box {
    display: flex;
    justify-content: space-between;
    height: 51px;
    overflow: hidden;
    border: 1px solid #666;
    border-width: 2px 1px 0 2px;
    border-bottom: 1px solid #fff;
    background-color: #cfdfee;
}
.fields {
    display: grid;
    grid-template-columns: 110px auto;
    grid-auto-rows: 26px;
    align-items: center;
    padding-left: 10px;
    font-family: "Liberation Mono", monospace;
    font-size: 22px;
}
.fields label {
    border-bottom: 1px solid #fff;
}
.wf-field {
    display: flex;
    align-items: center;
    gap: 12px;
}
.wf-field input {
    width: 106px;
    height: 22px;
    padding: 0 1px;
    border: 2px solid #fff;
    border-top-color: #777;
    border-left-color: #777;
    font-family: "Liberation Sans", Arial, sans-serif;
    font-size: 13px;
}
.wf-field svg {
    width: 14px;
    height: 8px;
}
.select {
    position: relative;
    width: 150px;
    height: 22px;
}
.select select {
    display: block;
    appearance: none;
    width: 150px;
    height: 22px;
    padding: 0 2px;
    border: 1px solid #666;
    border-radius: 0;
    background-color: #fff;
    color: #000;
    font-family: "Liberation Sans", Arial, sans-serif;
    font-size: 13px;
}
.select-arrow {
    position: absolute;
    top: 1px;
    right: 1px;
    width: 18px;
    height: 19px;
    display: flex;
    align-items: center;
    justify-content: center;
    border: 1px solid #888;
    background-color: #f0f0f0;
    pointer-events: none;
}
.select-arrow svg {
    width: 12px;
    height: 7px;
}
.mini-scroll {
    width: 17px;
    display: flex;
    flex-direction: column;
    background-color: #e8e8e8;
}
.mini-scroll button,
.mini-thumb {
    height: 16px;
    border: 1px solid #fff;
    border-right-color: #666;
    border-bottom: 2px solid #666;
    background-color: #f0f0f0;
}
.mini-thumb {
    height: 12px;
    margin-bottom: auto;
}
.mini-scroll svg {
    width: 8px;
    height: 4px;
}

/* Yellow keys */
.key-row {
    display: flex;
    gap: 2px;
    height: 20px;
    margin-left: 1px;
}
.key {
    width: 33px;
    height: 20px;
    border: 1px solid #666;
    border-bottom: none;
    background: linear-gradient(#fff8d4, #ffeca4);
    overflow: hidden;
}
.key svg {
    width: 31px;
    height: 20px;
}
.key.wide {
    width: 48px;
}
.key.wide svg {
    width: 46px;
}
.key-sep {
    width: 6px;
    height: 14px;
    align-self: flex-end;
    background: linear-gradient(90deg, transparent 2px, #a8b4c0 2px 3px, transparent 3px);
}

/* Navigation tree */
.head, .element-table th, .step-table th {
    height: 27px;
    padding: 0 6px;
    border: 1px solid #a3aebd;
    background: linear-gradient(#e2e5e9, #d5d8dc 35%, #cdd1d9 50%, #d6d9dd);
    font-size: 16px;
    font-weight: normal;
    line-height: 25px;
    text-align: left;
}
.element-table th, .step-table th {
    height: 26px;
}
.tree {
    list-style: none;
    height: 146px;
    border: 1px solid #b3c2d2;
    border-width: 0 0 0 1px;
    background-color: #eef4fc;
}
.tree li {
    display: flex;
    align-items: center;
    height: 26px;
    padding-left: 7px;
    border-bottom: 1px solid #a9bed4;
    background-color: #eef4fc;
}
.tree .child {
    padding-left: 27px;
    background-color: #f7faff;
}
.twig {
    width: 8px;
    height: 8px;
    margin-right: 8px;
}
.icon {
    width: 24px;
    height: 24px;
    margin-right: 3px;
}

/* Element table */
.elements {
    flex: 1;
    display: flex;
    flex-direction: column;
}
.elements .collapse {
    height: 15px;
}
.grid-box {
    flex: 1;
    display: flex;
    flex-direction: column;
    border: 1px solid #b3c2d2;
    border-width: 0 0 1px 1px;
    border-bottom-color: #fff;
    background-color: #f7faff;
}
.element-table {
    width: 100%;
    table-layout: fixed;
    border-collapse: collapse;
}
.element-table th {
    padding: 0 5px;
}
.c-name {
    width: 320px;
}
.c-m {
    width: 32px;
}
.element-table td {
    height: 26px;
    padding: 0;
    overflow: hidden;
    white-space: nowrap;
    color: #707070;
}
.element-table .own td {
    color: #000;
}
.element-table td:first-child {
    display: flex;
    align-items: center;
    padding-left: 7px;
    border-right: 1px solid #9aa8bb;
}
.element-table td:last-child {
    padding-left: 1px;
}
.element-table .twig {
    margin-right: 7px;
}
.flow {
    width: 24px;
    height: 14px;
    margin-right: 4px;
}
.grid-rest {
    flex: 1;
    width: 321px;
    border-right: 1px solid #9aa8bb;
}
.grid-foot {
    display: flex;
    height: 25px;
    padding-left: 321px;
    border-top: 1px solid #eef2f7;
}
.arrow {
    width: 24px;
    background-color: #f1f4fa;
    border: 1px solid #e6ebf2;
}
.arrow svg {
    width: 12px;
    height: 12px;
    fill: #51626f;
}
.thumb-h {
    border: 1px solid #a3b4c2;
    background: linear-gradient(#f2f6fa, #e3ecf4 50%, #d0dde8);
}
.thumb-h.small {
    width: 11px;
    margin-right: auto;
}

/* Workflow editor */
.editor {
    flex: 1;
    min-width: 0;
    display: flex;
    flex-direction: column;
    padding-top: 1px;
}
.editor-keys {
    margin-top: 16px;
}
.canvas-area {
    flex: 1;
    display: flex;
}
.canvas {
    flex: 1;
    position: relative;
    background-color: #f7faff;
}
.edges {
    position: absolute;
    left: 0;
    top: 0;
    width: 480px;
    height: 420px;
}
.node, .label {
    position: absolute;
}
.start {
    left: 126px;
    top: 10px;
    width: 54px;
    height: 68px;
}
.mail-node {
    left: 119px;
    top: 244px;
    width: 72px;
    height: 72px;
}
.done {
    left: 118px;
    top: 381px;
    width: 72px;
    height: 66px;
}
.hidden-node {
    left: 424px;
    top: 11px;
    width: 20px;
    height: 66px;
}
.label {
    left: 207px;
    font-family: "Liberation Sans", Arial, sans-serif;
    font-size: 17px;
    line-height: 19px;
}
.l-start {
    top: 25px;
}
.l-mail {
    top: 259px;
}
.l-done {
    top: 394px;
}
.l-sent {
    left: 131px;
    top: 338px;
    font-size: 11px;
}
.scroll-v {
    width: 15px;
    display: flex;
    flex-direction: column;
    background-color: #eef3f8;
}
.scroll-v .arrow {
    width: 15px;
    height: 25px;
}
.thumb-v {
    flex: 1;
    display: flex;
    align-items: center;
    justify-content: center;
    margin: 1px 0 3px 1px;
    border: 1px solid #a3b4c2;
    background: linear-gradient(90deg, #f2f6fa, #e3ecf4 50%, #d3e0ea);
}
.thumb-v .v-dots {
    width: 6px;
    height: 8px;
    background: repeating-linear-gradient(#9aa5b0 0 1px, transparent 1px 3px);
}
.overview {
    width: 21px;
    display: flex;
    flex-direction: column;
    margin-bottom: -14px;
    padding-top: 1px;
    background-color: #d0dfee;
}
.overview-top {
    height: 386px;
    border-top: 1px solid #0e1;
    border-bottom: 1px solid #8ea6c4;
}
.scroll-h {
    display: flex;
    height: 14px;
    margin: 0 24px 0 1px;
    background-color: #f3f6fa;
}
.scroll-h .thumb-h {
    flex: 1;
    margin: 0 3px;
    display: flex;
    align-items: center;
    justify-content: center;
}
.grip {
    width: 8px;
    height: 5px;
    background: repeating-linear-gradient(90deg, transparent 0 1px, #e3ecf4 1px 3px), linear-gradient(#9aa5b0 0 2px, transparent 2px 3px, #9aa5b0 3px);
}
.corner {
    width: 16px;
    background-color: #c0c0c0;
}

/* Dialog */
.dialog {
    position: absolute;
    left: 858px;
    top: 134px;
    width: 469px;
    border: 1px solid #7688b0;
    border-bottom-width: 2px;
    border-radius: 6px;
    background-color: #e8eff6;
}
.dialog-head {
    display: flex;
    align-items: center;
    height: 39px;
    padding: 0 8px 5px;
    border-top: 2px solid #a9bbe6;
    border-radius: 5px 5px 0 0;
    background: linear-gradient(#9aabde, #7d8eb2);
    color: #fff;
}
.dialog-head h2 {
    flex: 1;
    font-size: 16px;
    font-weight: normal;
}
.dialog-icon {
    width: 22px;
    height: 16px;
    margin-right: 5px;
}
.close {
    width: 24px;
    height: 24px;
    border: 1px solid #6f80a8;
    border-top-width: 2px;
    border-radius: 2px;
}
.close svg {
    width: 12px;
    height: 12px;
}
.dialog-body {
    margin: 11px 24px 0 5px;
    border-left: 1px solid #b3c2d2;
    border-bottom: 1px solid #fff;
}
.step-box {
    min-height: 561px;
    background-color: #f7faff;
}
.step-table {
    width: 100%;
    table-layout: fixed;
    border-collapse: collapse;
}
.c-end {
    width: 36px;
}
.step-table td {
    height: 26px;
    padding: 0 0 0 2px;
}
.step-table .icon {
    float: left;
}
.step-foot {
    height: 25px;
    margin-left: 3px;
    border-top: 1px solid #fff;
    background-color: #f7faff;
}
.dialog-foot {
    display: grid;
    grid-template-columns: 1fr 32px 100px;
    height: 55px;
    margin-top: 10px;
}
.foot-line {
    height: 13px;
    border-bottom: 1px solid #a9b8cc;
}
.foot-curve {
    width: 32px;
    height: 14px;
}
.foot-keys {
    display: flex;
    gap: 3px;
    padding: 12px 10px 0 0;
    justify-content: flex-end;
    border-top: 1px solid #a9b8cc;
}
.ok-key {
    width: 31px;
    height: 31px;
    border: 1px solid #666;
    border-radius: 2px;
    background: linear-gradient(#fffbdc, #ffe99a);
}
.ok-key svg {
    width: 24px;
    height: 24px;
}
.marker {
    position: absolute;
    left: -9px;
    top: 300px;
    width: 98px;
    height: 42px;
    pointer-events: none;
}
```
